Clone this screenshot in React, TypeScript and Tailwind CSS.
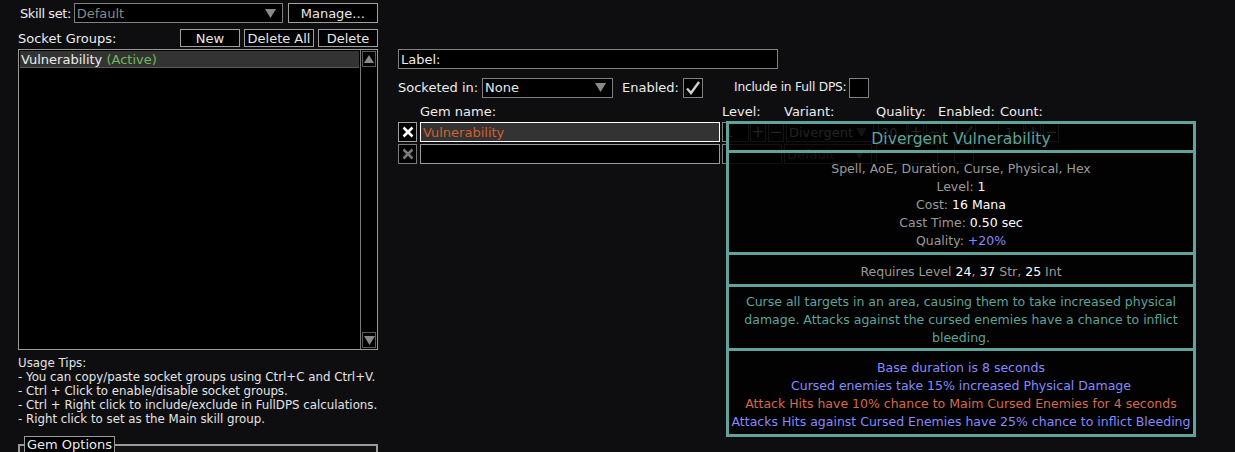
import React from "react";

const Arrow = ({ color = "#8a8a8a" }: { color?: string }) => (
  <svg width="11" height="9" viewBox="0 0 11 9">
    <polygon points="0,0 11,0 5.5,9" fill={color} />
  </svg>
);

function Dropdown({ text, className, dim }: { text: string; className: string; dim?: boolean }) {
  return (
    <div className={`flex items-center justify-between border border-[#808080] bg-black pl-[2px] pr-[6px] ${className}`}>
      <span className={dim ? "text-[#8a8a8a]" : "text-[#e8e8e8]"}>{text}</span>
      <Arrow />
    </div>
  );
}

function Button({ children, className }: { children: React.ReactNode; className: string }) {
  return (
    <div className={`flex items-center justify-center border border-[#a0a0a0] bg-black text-[#e8e8e8] ${className}`}>
      {children}
    </div>
  );
}

const Check = () => (
  <svg width="16" height="16" viewBox="0 0 16 16">
    <path d="M2 8.5 L6 13 L14 2" stroke="#cfcfcf" strokeWidth="2.4" fill="none" />
  </svg>
);

const XMark = ({ color }: { color: string }) => (
  <svg width="12" height="12" viewBox="0 0 12 12">
    <path d="M1.5 1.5 L10.5 10.5 M10.5 1.5 L1.5 10.5" stroke={color} strokeWidth="2.6" />
  </svg>
);

export default function App() {
  return (
    <div className="relative w-[1235px] h-[452px] overflow-hidden bg-[#0e0e10] text-[13px] text-[#ececec] font-['DejaVu_Sans','Liberation_Sans',sans-serif] leading-none whitespace-nowrap">
      <div className="flex">
        {/* Left: skill set + socket groups */}
        <div className="flex flex-col w-[360px] ml-[18px]">
          <div className="flex items-center h-[20px] mt-[3px]">
            <span className="ml-[2px] w-[54px] tracking-[-0.4px]">Skill set:</span>
            <Dropdown text="Default" dim className="w-[210px] h-[20px]" />
            <Button className="ml-[5px] w-[91px] h-[20px]">Manage...</Button>
          </div>
          <div className="flex items-center h-[18px] mt-[6px]">
            <span className="flex-1">Socket Groups:</span>
            <Button className="w-[60px] h-[18px]">New</Button>
            <Button className="ml-[4px] w-[70px] h-[18px]">Delete All</Button>
            <Button className="ml-[4px] w-[60px] h-[18px]">Delete</Button>
          </div>
          <div className="flex mt-[2px] h-[301px] border border-[#9a9a9a] bg-black">
            <div className="flex-1 p-[1px]">
              <div className="h-[17px] flex items-center bg-[#333] border-b border-[#5a5a5a] pl-[1px]">
                Vulnerability&nbsp;<span className="text-[#72b85a]">(Active)</span>
              </div>
            </div>
            <div className="w-[17px] flex flex-col justify-between border-l border-[#7a7a7a] p-[1px]">
              <div className="h-[16px] flex items-center justify-center border border-[#5a5a5a]">
                <svg width="10" height="8" viewBox="0 0 10 8"><polygon points="5,0 10,8 0,8" fill="#8a8a8a" /></svg>
              </div>
              <div className="h-[16px] flex items-center justify-center border border-[#5a5a5a]">
                <Arrow />
              </div>
            </div>
          </div>
          <div className="mt-[6px] leading-[14px] text-[11.8px] text-[#e4e4e4]">
            <div>Usage Tips:</div>
            <div>- You can copy/paste socket groups using Ctrl+C and Ctrl+V.</div>
            <div>- Ctrl + Click to enable/disable socket groups.</div>
            <div>- Ctrl + Right click to include/exclude in FullDPS calculations.</div>
            <div>- Right click to set as the Main skill group.</div>
          </div>
          <div className="relative mt-[10px] h-[40px]">
            <div className="mt-[8px] h-[40px] border-2 border-[#9a9a9a] bg-[#121212]" />
            <div className="absolute top-0 left-[6px] h-[17px] px-[2px] flex items-center border border-[#9a9a9a] bg-black">Gem Options</div>
          </div>
        </div>

        {/* Right: group editor */}
        <div className="flex flex-col ml-[20px] w-[820px]">
          <div className="mt-[49px] w-[380px] h-[20px] border border-[#808080] bg-black flex items-center pl-[2px]">Label:</div>
          <div className="flex items-center mt-[8px] h-[21px]">
            <span className="w-[84px]">Socketed in:</span>
            <Dropdown text="None" className="w-[131px] h-[20px]" />
            <span className="ml-[9px] w-[61px]">Enabled:</span>
            <div className="w-[20px] h-[20px] border border-[#808080] bg-black flex items-center justify-center"><Check /></div>
            <span className="ml-[31px] w-[115px] text-[12.2px] tracking-[-0.2px]">Include in Full DPS:</span>
            <div className="w-[20px] h-[20px] border border-[#808080] bg-black" />
          </div>
          <div className="flex items-center mt-[6px] h-[14px]">
            <span className="ml-[22px] w-[302px]">Gem name:</span>
            <span className="w-[62px]">Level:</span>
            <span className="w-[92px]">Variant:</span>
            <span className="w-[62px]">Quality:</span>
            <span className="w-[62px]">Enabled:</span>
            <span>Count:</span>
          </div>
          <div className="flex items-center mt-[4px] h-[20px]">
            <div className="w-[19px] h-[20px] border border-[#a0a0a0] bg-black flex items-center justify-center"><XMark color="#ffffff" /></div>
            <div className="ml-[3px] w-[300px] h-[20px] border border-white bg-[#333] flex items-center pl-[2px] text-[#d0602f]">Vulnerability</div>
            <div className="ml-[2px] w-[27px] h-[20px] border border-[#808080] bg-black pl-[2px] flex items-center">1</div>
            <div className="ml-[1px] w-[16px] h-[20px] border border-[#808080] flex items-center justify-center text-[15px]">+</div>
            <div className="ml-[2px] w-[16px] h-[20px] border border-[#808080] flex items-center justify-center text-[15px]">−</div>
            <Dropdown text="Divergent" className="ml-[2px] w-[88px] h-[20px]" />
            <div className="ml-[4px] w-[29px] h-[20px] border border-[#808080] bg-black pl-[2px] flex items-center">20</div>
            <div className="ml-[1px] w-[16px] h-[20px] border border-[#808080] flex items-center justify-center text-[15px]">+</div>
            <div className="ml-[2px] w-[16px] h-[20px] border border-[#808080] flex items-center justify-center text-[15px]">−</div>
            <div className="ml-[14px] w-[20px] h-[20px] border border-[#808080] bg-black flex items-center justify-center"><Check /></div>
            <div className="ml-[22px] w-[26px] h-[20px] border border-[#808080] bg-black pl-[6px] flex items-center">1</div>
            <div className="ml-[1px] w-[16px] h-[20px] border border-[#808080] flex items-center justify-center text-[15px]">+</div>
            <div className="ml-[2px] w-[16px] h-[20px] border border-[#808080] flex items-center justify-center text-[15px]">−</div>
          </div>
          <div className="flex items-center mt-[2px] h-[20px]">
            <div className="w-[19px] h-[20px] border border-[#7a7a7a] bg-black flex items-center justify-center"><XMark color="#7a7a7a" /></div>
            <div className="ml-[3px] w-[300px] h-[20px] border border-[#9a9a9a] bg-black" />
            <div className="ml-[2px] w-[60px] h-[20px] border border-[#808080] bg-black" />
            <Dropdown text="Default" dim className="ml-[2px] w-[88px] h-[20px]" />
            <div className="ml-[4px] w-[62px] h-[20px] border border-[#808080] bg-black" />
            <div className="ml-[16px] w-[20px] h-[20px] border border-[#808080] bg-black" />
          </div>
        </div>
      </div>

      {/* Gem tooltip */}
      <div className="absolute left-[726px] top-[121px] w-[470px] h-[316px] border-[3px] border-[#5fa39a] bg-black/[0.86] flex flex-col divide-y-[3px] divide-[#5fa39a] text-center text-[12.5px] leading-[18px]">
        <div className="shrink-0 h-[29px] pt-[3px] flex items-center justify-center text-[15.6px] text-[#5fa39a]">Divergent Vulnerability</div>
        <div className="shrink-0 h-[102px] pt-[7px] text-[#9a9a9a]">
          <div>Spell, AoE, Duration, Curse, Physical, Hex</div>
          <div>Level: <span className="text-white">1</span></div>
          <div>Cost: <span className="text-white">16 Mana</span></div>
          <div>Cast Time: <span className="text-white">0.50 sec</span></div>
          <div>Quality: <span className="text-[#8888ff]">+20%</span></div>
        </div>
        <div className="shrink-0 h-[32px] pt-[4px] flex items-center justify-center text-[#9a9a9a]">
          <span>Requires Level <span className="text-white">24</span>, <span className="text-white">37</span> Str, <span className="text-white">25</span> Int</span>
        </div>
        <div className="shrink-0 h-[64px] pt-[4px] flex flex-col justify-center text-[#5fa39a]">
          <div>Curse all targets in an area, causing them to take increased physical</div>
          <div>damage. Attacks against the cursed enemies have a chance to inflict</div>
          <div>bleeding.</div>
        </div>
        <div className="flex-1 pt-[4px] flex flex-col justify-center">
          <div className="text-[#8888ff]">Base duration is 8 seconds</div>
          <div className="text-[#8888ff]">Cursed enemies take 15% increased Physical Damage</div>
          <div className="text-[#d4694d]">Attack Hits have 10% chance to Maim Cursed Enemies for 4 seconds</div>
          <div className="text-[#8888ff]">Attacks Hits against Cursed Enemies have 25% chance to inflict Bleeding</div>
        </div>
      </div>
    </div>
  );
}
